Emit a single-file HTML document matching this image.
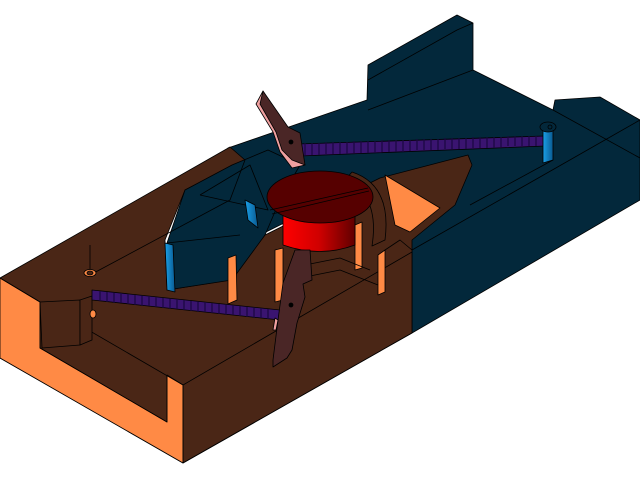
<!DOCTYPE html>
<html><head><meta charset="utf-8"><style>html,body{margin:0;padding:0;background:#fff;width:640px;height:480px;overflow:hidden}</style></head>
<body>
<svg width="640" height="480" viewBox="0 0 640 480" xmlns="http://www.w3.org/2000/svg" stroke="#000" stroke-width="0.8" stroke-linejoin="round">
<defs>
<linearGradient id="cyl" x1="0" x2="1"><stop offset="0" stop-color="#ff0000"/><stop offset="0.5" stop-color="#d00000"/><stop offset="1" stop-color="#600000"/></linearGradient>
<linearGradient id="cy" x1="0" x2="1"><stop offset="0" stop-color="#1aa0e8"/><stop offset="1" stop-color="#0a5a90"/></linearGradient>
</defs>
<polygon fill="#03283b" points="228,148 367,100 368,65 457,15 473,23 473,70 553,110 555,100 600,97 640,120 640,200 412,333 412,250 330,200 260,235"/>
<polyline fill="none" points="368,110 473,70"/>
<polyline fill="none" points="368,80 457,30 473,23"/>
<polyline fill="none" points="412,250 640,120"/>
<polyline fill="none" points="553,110 640,158"/>
<polyline fill="none" points="470,205 553,160"/>
<polygon fill="#4a2616" points="0,278 230,147 245,160 185,190 165,240 167,290 230,280 265,235 380,178 468,155 472,165 455,205 412,240 412,333 183,463 0,358"/>
<polygon fill="#03283b" points="167,243 185,190 232,165 268,150 300,165 280,200 265,235 232,280 167,290"/>
<polyline fill="none" points="200,195 250,165 268,210 200,195"/>
<polyline fill="none" points="167,243 240,235"/>
<polygon fill="url(#cy)" points="165,243 173,245 175,292 167,290"/>
<polygon fill="url(#cy)" points="245,200 255,205 258,228 248,220"/>
<!-- brown ring around disc right -->
<path d="M352,172 Q392,185 385,240 L372,246 Q380,195 345,180 Z" fill="#4a2616"/>
<polygon fill="#ff8a45" points="0,278 40,302 40,348 167,422 167,375 183,385 183,463 0,358"/>
<polyline fill="none" points="0,278 40,302 183,385 412,252"/>
<polyline fill="none" points="40,302 40,348 167,422 167,375"/>
<polyline fill="none" points="183,385 183,463 412,333"/>
<polyline fill="none" points="90,245 90,275 230,200 245,160"/>
<polygon fill="#4a2616" points="40,302 80,300 80,345 42,348"/>
<polygon fill="#4a2616" points="80,300 92,296 92,340 80,345"/>
<ellipse cx="90" cy="273" rx="6" ry="3.5" fill="#ff8a45"/>
<ellipse cx="90" cy="273" rx="3" ry="2" fill="#4a2616"/>
<ellipse cx="93" cy="314" rx="3" ry="4" fill="#ff8a45"/>
<polygon fill="#ff8a45" points="228,258 236,255 237,300 228,304"/>
<polygon fill="#ff8a45" points="385,175 440,208 410,232 395,225"/>
<polygon fill="#ff8a45" points="275,250 283,248 283,300 275,302"/>
<polygon fill="#ff8a45" points="355,225 362,222 362,268 355,270"/>
<polygon fill="#ff8a45" points="378,255 385,250 385,292 378,295"/>
<polyline fill="none" points="290,280 340,270 378,285"/>
<polyline fill="none" points="290,268 340,258 370,270"/>
<polyline fill="none" points="385,250 400,240 412,250"/>
<polygon fill="#3a1470" points="298,144 545,136 545,146 300,156"/>
<polygon fill="#3a1470" points="92,290 280,310 280,320 92,300"/>
<g stroke="#1a0840" stroke-width="1.2">
<path d="M305 143v12M312 143v12M319 143v12M326 142v12M333 142v12M340 142v12M347 142v12M354 141v12M361 141v12M368 141v12M375 141v12M382 140v12M389 140v12M396 140v12M403 140v12M410 140v11M417 139v11M424 139v11M431 139v11M438 139v11M445 138v11M452 138v11M459 138v11M466 138v11M473 137v11M480 137v11M487 137v11M494 137v11M501 137v10M508 136v10M515 136v10M522 136v10M529 136v10M536 136v10"/>
<path d="M100 291v10M107 292v10M114 293v10M121 293v10M128 294v10M135 295v10M142 296v10M149 296v10M156 297v10M163 298v10M170 299v10M177 299v10M184 300v10M191 301v10M198 302v10M205 302v10M212 303v10M219 304v10M226 305v10M233 305v10M240 306v10M247 307v10M254 308v10M261 308v10M268 309v10"/>
</g>
<polygon fill="url(#cy)" points="543,128 553,128 553,160 543,163"/>
<ellipse cx="548" cy="127" rx="8" ry="5" fill="#03283b"/>
<circle cx="550" cy="127" r="2" fill="none"/>
<path d="M283 200 L283 245 Q320 258 355 245 L355 200 Z" fill="url(#cyl)"/>
<ellipse cx="320" cy="197" rx="53" ry="26" fill="#560000"/>
<path d="M270 210 L368 188" fill="none"/>
<path d="M272 214 L369 191" fill="none"/>
<polygon fill="#f0a0a0" points="263,91 256,104 273,132 280,152 292,168 305,165"/>
<polygon fill="#4a2626" points="263,91 288,127 300,133 305,165 292,160 282,150 276,132 260,104"/>
<circle cx="291" cy="142" r="2" fill="#000"/>
<polygon fill="#4a2626" points="295,250 310,250 312,280 303,284 305,297 297,323 292,350 287,358 273,367 273,360 278,320 283,283"/>
<polygon fill="#f0a0a0" points="275,318 278,320 276,330 273,330"/>
<circle cx="291" cy="305" r="2" fill="#000"/>
</svg>
</body></html>
